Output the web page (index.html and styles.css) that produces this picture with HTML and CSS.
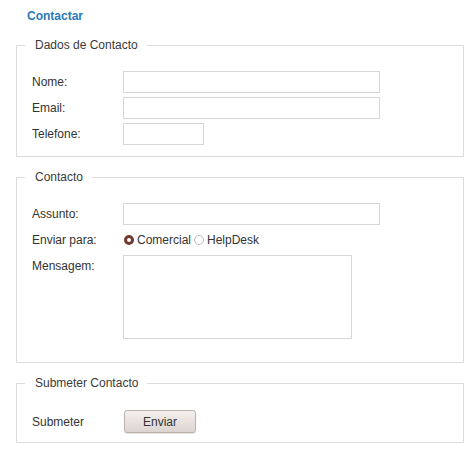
FILE: index.html
```html
<!DOCTYPE html>
<html lang="pt">
<head>
<meta charset="utf-8">
<title>Contactar</title>
<link rel="stylesheet" href="styles.css">
</head>
<body>
<div class="page">
  <h1 class="title">Contactar</h1>

  <fieldset class="box">
    <legend>Dados de Contacto</legend>
    <div class="rows">
      <label class="lbl" for="nome">Nome:</label>
      <input class="field wide" id="nome" type="text">
      <label class="lbl" for="email">Email:</label>
      <input class="field wide" id="email" type="text">
      <label class="lbl" for="tel">Telefone:</label>
      <input class="field short" id="tel" type="text">
    </div>
  </fieldset>

  <fieldset class="box box-mid">
    <legend>Contacto</legend>
    <div class="rows">
      <label class="lbl" for="assunto">Assunto:</label>
      <input class="field wide" id="assunto" type="text">
      <span class="lbl">Enviar para:</span>
      <div class="radios">
        <label class="opt"><input class="radio" type="radio" name="dest" checked>Comercial</label>
        <label class="opt"><input class="radio" type="radio" name="dest">HelpDesk</label>
      </div>
      <label class="lbl" for="msg">Mensagem:</label>
      <textarea class="field area" id="msg"></textarea>
    </div>
  </fieldset>

  <fieldset class="box box-last">
    <legend>Submeter Contacto</legend>
    <div class="rows rows-center">
      <span class="lbl">Submeter</span>
      <div><button class="btn" type="button">Enviar</button></div>
    </div>
  </fieldset>
</div>
</body>
</html>
```

FILE: styles.css
```css
html, body {
  margin: 0;
  padding: 0;
  background: #ffffff;
}

body {
  font-family: "Liberation Sans", Arial, sans-serif;
  font-size: 12px;
  color: #333333;
}

.page {
  width: 448px;
  padding: 8px 0 0 16px;
}

.title {
  margin: 0 0 13px 11px;
  font-size: 12px;
  line-height: 16px;
  font-weight: bold;
  color: #2a78b8;
}

.box {
  margin: 0 0 12px 0;
  padding: 18px 15px 11px 15px;
  border: 1px solid #dcdcdc;
  min-width: 0;
}

.box-mid {
  padding-bottom: 23px;
}

.box-last {
  padding-top: 19px;
  padding-bottom: 9px;
}

.box legend {
  margin-left: -7px;
  padding: 0 9px 0 10px;
  font-size: 12px;
  line-height: 16px;
  color: #3a3a3a;
}

.rows {
  display: grid;
  grid-template-columns: 91px 1fr;
  row-gap: 4px;
  align-items: start;
}

.rows-center {
  align-items: center;
}

.lbl {
  line-height: 22px;
  color: #333333;
}

.field {
  display: block;
  box-sizing: border-box;
  height: 22px;
  margin: 0;
  padding: 2px 4px;
  border: 1px solid #d6d6d6;
  background: #ffffff;
  font-family: inherit;
  font-size: 12px;
  outline: none;
}

.wide {
  width: 257px;
}

.short {
  width: 81px;
}

.area {
  width: 229px;
  height: 84px;
  resize: none;
}

.radios {
  display: flex;
  align-items: center;
  height: 22px;
  gap: 2px;
}

.opt {
  display: flex;
  align-items: center;
  gap: 3px;
  color: #333333;
}

.radio {
  -webkit-appearance: none;
  appearance: none;
  box-sizing: border-box;
  width: 10px;
  height: 10px;
  margin: 0 0 0 1px;
  border-radius: 50%;
  border: 1px solid #bdbdbd;
  background: #ffffff;
}

.radio:checked {
  border: 3px solid #6f3a30;
  background: #ffffff;
}

.btn {
  box-sizing: border-box;
  width: 72px;
  height: 23px;
  margin: 0 0 0 1px;
  padding: 0;
  border: 1px solid #bdb1ab;
  border-radius: 3px;
  background: linear-gradient(#f4efed, #ddd4d0);
  box-shadow: 0 1px 1px rgba(0, 0, 0, 0.12);
  font-family: inherit;
  font-size: 12px;
  color: #333333;
}
```
